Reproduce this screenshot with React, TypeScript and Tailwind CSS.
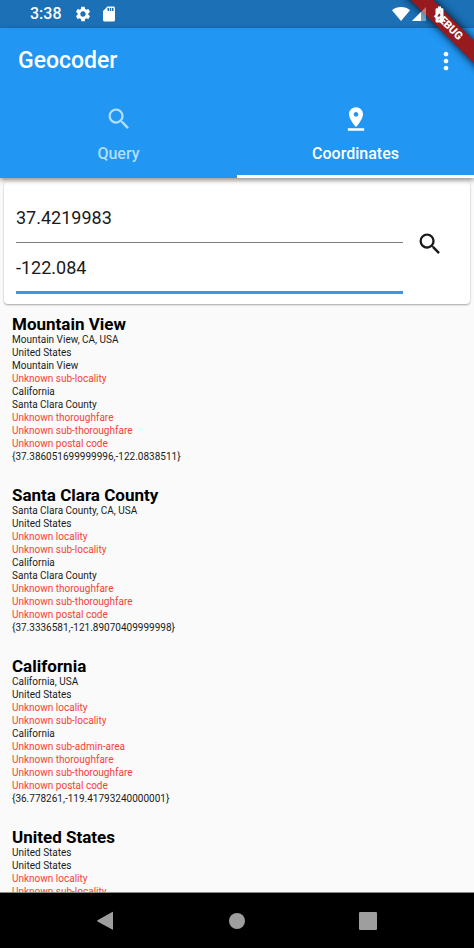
import React, { useState } from 'react';
import { MdBatteryChargingFull, MdMoreVert, MdPinDrop, MdSdCard, MdSearch, MdSettings } from 'react-icons/md';

interface Address {
  name: string;
  addressLine: string;
  country: string;
  locality?: string;
  subLocality?: string;
  adminArea?: string;
  subAdminArea?: string;
  coordinates: string;
}

const results: Address[] = [
  {
    name: 'Mountain View',
    addressLine: 'Mountain View, CA, USA',
    country: 'United States',
    locality: 'Mountain View',
    adminArea: 'California',
    subAdminArea: 'Santa Clara County',
    coordinates: '{37.386051699999996,-122.0838511}'
  },
  {
    name: 'Santa Clara County',
    addressLine: 'Santa Clara County, CA, USA',
    country: 'United States',
    adminArea: 'California',
    subAdminArea: 'Santa Clara County',
    coordinates: '{37.3336581,-121.89070409999998}'
  },
  {
    name: 'California',
    addressLine: 'California, USA',
    country: 'United States',
    adminArea: 'California',
    coordinates: '{36.778261,-119.41793240000001}'
  },
  {
    name: 'United States',
    addressLine: 'United States',
    country: 'United States',
    coordinates: '{37.09024,-95.712891}'
  }
];

function StatusBar() {
  return (
    <div className="h-7 shrink-0 flex items-center justify-between bg-[#1b70b6] pl-[30px] pr-[25px] text-white">
      <div className="flex items-center">
        <span className="text-base font-medium">3:38</span>
        <MdSettings className="ml-3" size={18} />
        <MdSdCard className="ml-2" size={18} />
      </div>
      <div className="relative z-20 flex items-center">
        <svg width="18" height="14" viewBox="0 0 18 14" fill="currentColor">
          <path d="M9 14 18 3.2C15.5 1.2 12.4 0 9 0S2.500 1.200 0 3.200Z" />
        </svg>
        <svg className="ml-[2px]" width="14" height="14" viewBox="0 0 14 14" fill="currentColor">
          <path d="M0 14 14 0V14Z" opacity="0.4" />
          <path d="M0 14 9 5V14Z" />
        </svg>
        <MdBatteryChargingFull className="ml-1" size={19} />
      </div>
    </div>
  );
}

function DebugBanner() {
  return (
    <div className="absolute top-0 right-0 z-10 w-20 h-20 overflow-hidden pointer-events-none">
      <div className="absolute top-[18px] -right-[34px] w-30 h-4 rotate-45 bg-[#971a1e] text-center text-[11px] leading-4 font-black text-white shadow-[0_0_8px_rgba(0,0,0,0.9)]">
        DEBUG
      </div>
    </div>
  );
}

function ResultLine({ value, missing }: { value?: string; missing?: string }) {
  return <p className={value ? '' : 'text-[#f44336]'}>{value || `Unknown ${missing}`}</p>;
}

function Result({ address }: { address: Address }) {
  return (
    <li>
      <h2 className="text-[17px] leading-[18px] font-bold text-black">{address.name}</h2>
      <div className="text-[10px] leading-[13px]">
        <ResultLine value={address.addressLine} />
        <ResultLine value={address.country} />
        <ResultLine value={address.locality} missing="locality" />
        <ResultLine value={address.subLocality} missing="sub-locality" />
        <ResultLine value={address.adminArea} missing="admin-area" />
        <ResultLine value={address.subAdminArea} missing="sub-admin-area" />
        <ResultLine missing="thoroughfare" />
        <ResultLine missing="sub-thoroughfare" />
        <ResultLine missing="postal code" />
        <ResultLine value={address.coordinates} />
      </div>
    </li>
  );
}

export default function App() {
  const [tab, setTab] = useState('coordinates');
  const [latitude, setLatitude] = useState('37.4219983');
  const [longitude, setLongitude] = useState('-122.084');

  return (
    <div className="relative h-screen flex flex-col overflow-hidden bg-[#fafafa] font-[Roboto,sans-serif] text-[#1a1a1a]">
      <StatusBar />
      <DebugBanner />

      {/* App bar */}
      <header className="relative shrink-0 bg-[#2196f3] text-white shadow-[0_2px_5px_rgba(0,0,0,0.45)]">
        <div className="h-[65px] flex items-center justify-between pl-[18px] pr-[14px]">
          <h1 className="pt-[2px] text-[23px] font-medium">Geocoder</h1>
          <button aria-label="More options">
            <MdMoreVert size={28} />
          </button>
        </div>
        <div className="grid grid-cols-2" role="tablist">
          <button
            role="tab"
            aria-selected={tab === 'query'}
            onClick={() => setTab('query')}
            className={`h-[85px] flex flex-col items-center justify-center gap-[11px] border-b-3 text-base leading-5 font-medium ${tab === 'query' ? 'border-white' : 'border-transparent text-[#b0defb]'}`}
          >
            <MdSearch size={28} />
            Query
          </button>
          <button
            role="tab"
            aria-selected={tab === 'coordinates'}
            onClick={() => setTab('coordinates')}
            className={`h-[85px] flex flex-col items-center justify-center gap-[11px] border-b-3 text-base leading-5 font-medium ${tab === 'coordinates' ? 'border-white' : 'border-transparent text-[#b0defb]'}`}
          >
            <MdPinDrop size={28} />
            Coordinates
          </button>
        </div>
      </header>

      <main className="flex-1 min-h-0 flex flex-col">
        {/* Search card */}
        <form
          onSubmit={e => e.preventDefault()}
          className="shrink-0 m-1 flex items-center rounded bg-white pt-[11px] pb-[10px] pl-3 pr-[26px] shadow-[0_1px_2px_rgba(0,0,0,0.35)]"
        >
          <div className="flex-1">
            <input
              aria-label="Latitude"
              value={latitude}
              onChange={e => setLatitude(e.target.value)}
              className="block w-full h-[50px] border-b border-[#7c7c7c] text-lg outline-none"
            />
            <input
              aria-label="Longitude"
              value={longitude}
              onChange={e => setLongitude(e.target.value)}
              className="block w-full h-[51px] border-b-3 border-[#3c96e4] text-lg outline-none"
            />
          </div>
          <button type="submit" aria-label="Search" className="ml-[13px]">
            <MdSearch size={28} />
          </button>
        </form>

        {/* Results */}
        <ul className="flex-1 min-h-0 overflow-y-auto [scrollbar-width:none] flex flex-col gap-[23px] px-3 pt-[7px]">
          {results.map(address => (
            <Result key={address.name} address={address} />
          ))}
        </ul>
      </main>

      {/* System navigation */}
      <nav className="h-14 shrink-0 grid grid-cols-3 items-center justify-items-center border-t border-[#8a8a8a] bg-black px-10 text-[#9e9e9e]">
        <button aria-label="Back">
          <svg width="18" height="20" viewBox="0 0 18 20" fill="currentColor">
            <path d="M16 1.500V18Q16 19 15.200 18.500L.5 10.400Q-.2 9.800.5 9.200L15.200 .9Q16 .5 16 1.500Z" />
          </svg>
        </button>
        <button aria-label="Home" className="size-4 rounded-full bg-[#9e9e9e]" />
        <button aria-label="Recent apps" className="size-[18px] rounded-[1px] bg-[#9e9e9e]" />
      </nav>
    </div>
  );
}
